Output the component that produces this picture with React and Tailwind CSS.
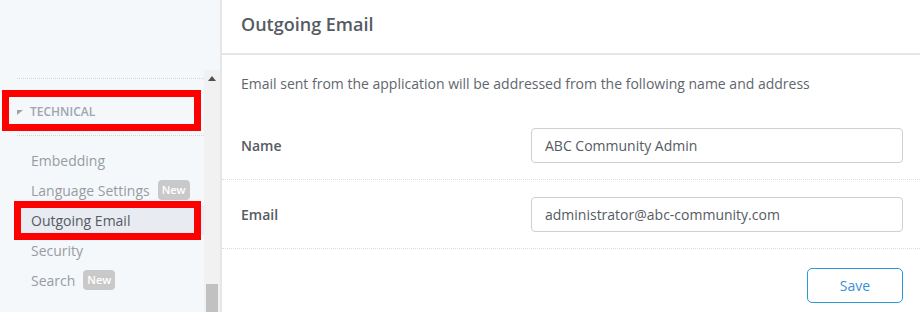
import React from 'react';

const NavItem = ({ label, active, badge }) => (
  <div
    className={`flex h-[30px] items-center pl-[11px] text-[14px] ${
      active ? 'bg-[#e8ebf2] text-[#555b63]' : 'text-[#979ca3]'
    }`}
  >
    <span>{label}</span>
    {badge && (
      <span className="ml-[8px] rounded-[4px] bg-[#c9c9c9] px-[4px] py-[1px] text-[11px] font-semibold leading-[18px] text-white">
        {badge}
      </span>
    )}
  </div>
);

const Row = ({ label, value }) => (
  <div className="flex h-[69px] items-center border-b border-dotted border-[#dcdcdc] pl-[19px] pr-[17px]">
    <div className="w-[290px] text-[14px] font-semibold text-[#555b63]">{label}</div>
    <div className="flex h-[35px] flex-1 items-center rounded-[4px] border border-[#cfcfcf] px-[13px] text-[14px] text-[#555b63]">
      {value}
    </div>
  </div>
);

export default function App() {
  return (
    <div
      className="relative flex h-[312px] w-[920px] overflow-hidden bg-white"
      style={{ fontFamily: '"Open Sans", "Noto Sans", sans-serif' }}
    >
      {/* sidebar */}
      <aside className="flex w-[220px] flex-col bg-[#f5f8fb]">
        <div className="h-[70px]" />
        <div className="flex flex-1">
          <div className="w-[204px] pt-[8px]">
            <div className="ml-[17px] h-[58px] border-y border-dotted border-[#d3d7dc] pt-[25px]">
              <div className="flex items-center">
                <svg width="6" height="6" viewBox="0 0 6 6" className="mt-[1px]">
                  <polygon points="0,0 6,0 0,5" fill="#9ea3a9" />
                </svg>
                <span className="ml-[7px] text-[12px] font-semibold uppercase leading-[16px] text-[#9ea5ae]">
                  Technical
                </span>
              </div>
            </div>
            <div className="ml-[20px] pt-[9px]">
              <NavItem label="Embedding" />
              <NavItem label="Language Settings" badge="New" />
              <NavItem label="Outgoing Email" active />
              <NavItem label="Security" />
              <NavItem label="Search" badge="New" />
            </div>
          </div>
          <div className="flex w-[16px] flex-col bg-[#f1f1f1]">
            <div className="flex h-[16px] items-center justify-center">
              <svg width="8" height="5" viewBox="0 0 8 5">
                <polygon points="4,0 8,5 0,5" fill="#505050" />
              </svg>
            </div>
            <div className="flex-1" />
            <div className="mx-[2px] h-[28px] bg-[#c1c1c1]" />
          </div>
        </div>
      </aside>

      {/* main */}
      <main className="flex flex-1 flex-col border-l-2 border-[#e6e6e6]">
        <div className="flex h-[55px] items-center border-b-2 border-[#e6e6e6] pb-[4px] pl-[19px]">
          <h1 className="text-[18px] font-semibold text-[#555b63]">Outgoing Email</h1>
        </div>
        <p className="h-[56px] pl-[19px] pt-[18px] text-[14px] text-[#61666d]">
          Email sent from the application will be addressed from the following name and address
        </p>
        <Row label="Name" value="ABC Community Admin" />
        <Row label="Email" value="administrator@abc-community.com" />
        <div className="flex justify-end pr-[17px] pt-[19px]">
          <button className="h-[35px] w-[96px] rounded-[5px] border border-[#2c9ad8] text-[14px] text-[#3a8fd8]">
            Save
          </button>
        </div>
      </main>

      {/* red annotation boxes */}
      <div className="absolute left-[2px] top-[90px] h-[41px] w-[199px] border-[7px] border-[#ff0000]" />
      <div className="absolute left-[14px] top-[201px] h-[39px] w-[187px] border-[7px] border-[#ff0000]" />
    </div>
  );
}
